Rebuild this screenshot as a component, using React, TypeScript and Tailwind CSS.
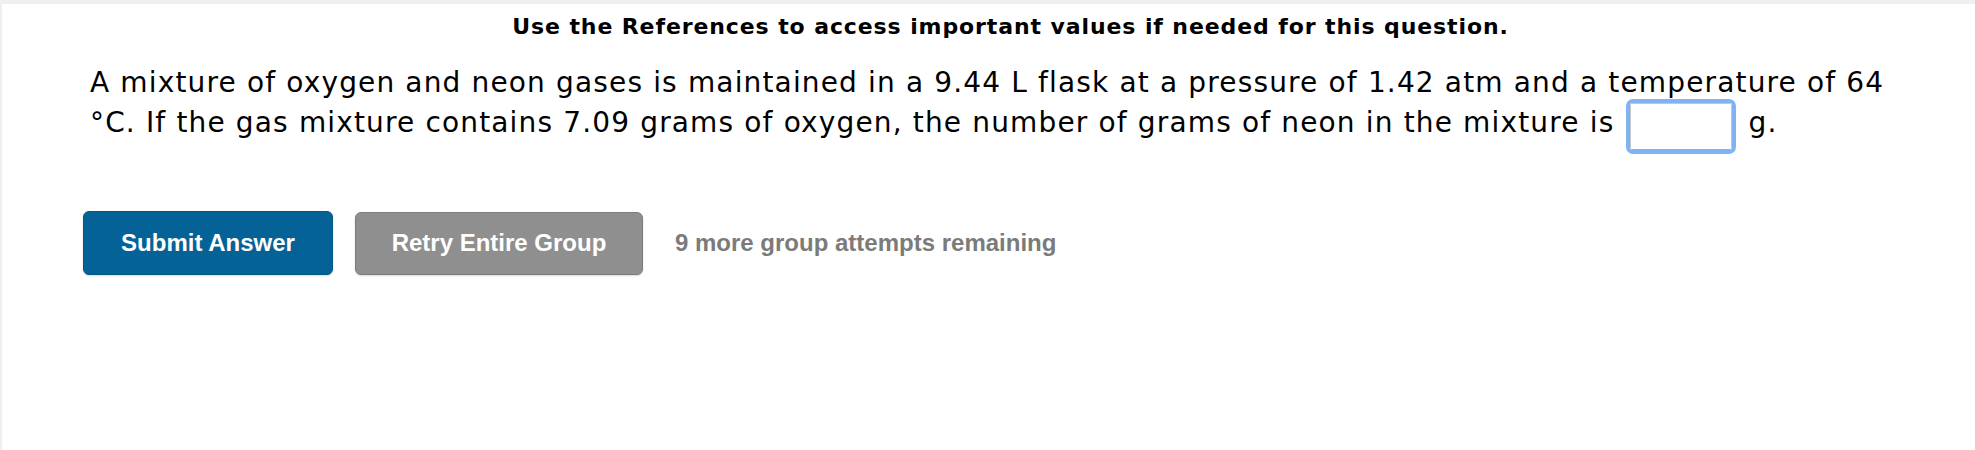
import type { ComponentProps } from "react";

const verdana = "[font-family:'DejaVu_Sans',Verdana,sans-serif]";

export default function App() {
  return (
    <div className="h-[450px] w-full bg-[#efefef] pt-[4px] pl-[2px]">
      <main className="flex h-full flex-col bg-white">
        <h1
          className={`pt-[8px] pl-[44px] text-center text-[22px] leading-[30px] font-bold tracking-[0.9px] text-black ${verdana}`}
        >
          Use the References to access important values if needed for this
          question.
        </h1>

        <Question />

        <div className="mt-[68px] flex items-center pl-[81px]">
          <ActionButton className="w-[250px] h-[64px] bg-[#056297] border-[#05598a]">
            Submit Answer
          </ActionButton>
          <ActionButton className="ml-[22px] w-[288px] h-[63px] bg-[#8f8f8f] border-[#7c7c7c]">
            Retry Entire Group
          </ActionButton>
          <span className="ml-[32px] text-[24px] font-bold text-[#7b7b7b] [font-family:'Liberation_Sans',Arial,sans-serif]">
            9 more group attempts remaining
          </span>
        </div>
      </main>
    </div>
  );
}

const Question = () => {
  return (
    <p
      className={`mt-[21px] pl-[88px] text-[28px] leading-[40px] tracking-[1.15px] text-black ${verdana}`}
    >
      A mixture of oxygen and neon gases is maintained in a 9.44 L flask at a
      pressure of 1.42 atm and a temperature of 64
      <br />
      °C. If the gas mixture contains 7.09 grams of oxygen, the number of grams
      of neon in the mixture is <AnswerBox /> g.
    </p>
  );
};

// focused answer field, pulled out of the line box so it doesn't push lines apart
const AnswerBox = () => {
  return (
    <span className="mx-[2px] -my-[20px] inline-block h-[55px] w-[110px] overflow-hidden rounded-[7px] border-4 border-[#80b3f3] align-[-2px]">
      <span className="block h-full w-full rounded-[2px] border border-[#c6c6c6] border-b-[#a9a9a9] bg-white" />
    </span>
  );
};

const ActionButton = ({ className, ...props }: ComponentProps<"button">) => {
  return (
    <button
      type="button"
      className={`flex shrink-0 items-center justify-center rounded-[6px] border text-[24px] font-bold text-white shadow-[0_1px_2px_rgba(0,0,0,0.15)] [font-family:'Liberation_Sans',Arial,sans-serif] ${className}`}
      {...props}
    />
  );
};
